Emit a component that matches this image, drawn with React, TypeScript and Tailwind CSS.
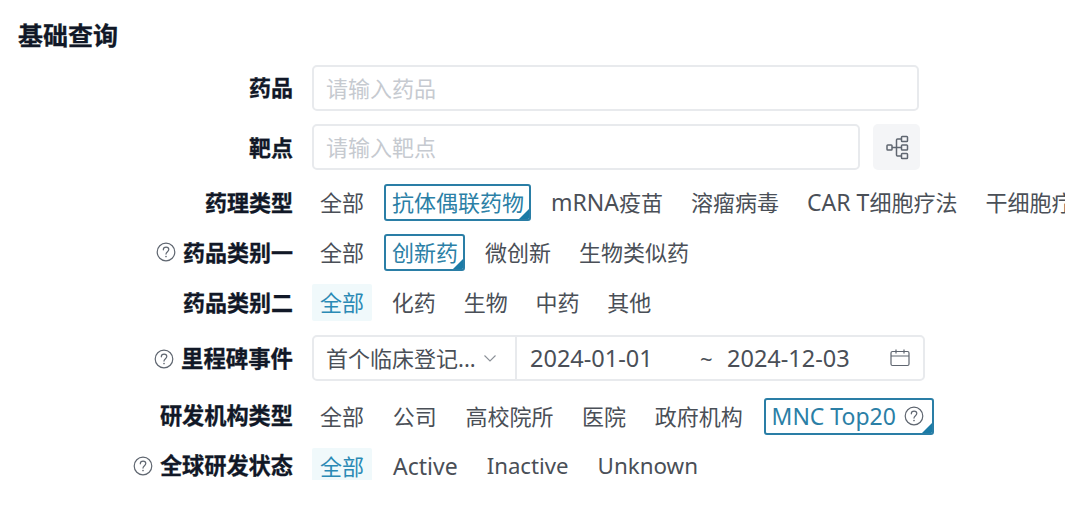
import * as React from "react"

function Help({ className = "" }: { className?: string }) {
  return (
    <svg viewBox="0 0 20 20" className={`w-[20px] h-[20px] shrink-0 ${className}`} fill="none" stroke="#5f6670" strokeWidth="1.2">
      <circle cx="10" cy="10" r="8.8" />
      <path d="M7.3 7.8c0-1.5 1.2-2.6 2.8-2.6s2.7 1 2.7 2.3c0 2.2-2.8 2.2-2.8 4.6" strokeLinecap="round" />
      <circle cx="10" cy="14.6" r="0.8" fill="#5f6670" stroke="none" />
    </svg>
  )
}

function Tag({ label, state, help }: { label: React.ReactNode; state?: "picked" | "soft"; help?: boolean }) {
  if (state === "picked") {
    return (
      <span className={`relative flex items-center gap-2 shrink-0 h-[37px] pl-[6px] pb-[2px] rounded-[3px] border-2 border-[#2a7ea6] text-[#2b7fa6] overflow-hidden ${help ? "pr-2" : "pr-[5px]"}`}>
        {label}
        {help && <Help />}
        <span className="absolute -right-px -bottom-px w-0 h-0 border-l-[12px] border-l-transparent border-b-[12px] border-b-[#1b7ba6]" />
      </span>
    )
  }
  return (
    <span className={`flex items-center shrink-0 h-[37px] px-2 pb-[2px] rounded-[2px] ${state === "soft" ? "bg-[#f0f9fb] text-[#2b8ab5]" : "text-[#4a4f57]"}`}>
      {label}
    </span>
  )
}

function Row({
  label,
  help,
  top,
  labelClass = "pb-[1px]",
  gap = "gap-3",
  children,
}: {
  label: string
  help?: boolean
  top: string
  labelClass?: string
  gap?: string
  children: React.ReactNode
}) {
  return (
    <div className={`flex items-center gap-[19px] ${top}`}>
      <div className={`w-[275px] shrink-0 flex items-center justify-end gap-[7px] font-bold text-[#111827] [-webkit-text-stroke:0.3px_#111827] ${labelClass}`}>
        {help && <Help />}
        <span>{label}</span>
      </div>
      <div className={`flex-1 min-w-0 flex items-center overflow-hidden whitespace-nowrap ${gap}`}>{children}</div>
    </div>
  )
}

export default function App() {
  return (
    <div className="w-[1080px] h-[514px] overflow-hidden bg-white pl-[18px] pr-[15px] pt-[19px] text-[22px] leading-[30px] font-['Noto_Sans','Noto_Sans_CJK_SC',sans-serif]">
      <h2 className="h-[32px] text-[25px] leading-[32px] font-bold text-[#111827] [-webkit-text-stroke:0.3px_#111827]">基础查询</h2>

      <Row label="药品" top="mt-[14px]" labelClass="pb-[2px]">
        <input readOnly placeholder="请输入药品" className="w-[607px] h-[46px] px-[12px] pb-[1px] rounded-[5px] border-2 border-[#e8eaed] placeholder:text-[#c6cad0] outline-none" />
      </Row>

      <Row label="靶点" top="mt-[13px]">
        <input readOnly placeholder="请输入靶点" className="w-[548px] h-[46px] px-[12px] pb-[1px] rounded-[5px] border-2 border-[#e8eaed] placeholder:text-[#c6cad0] outline-none" />
        <button className="flex items-center justify-center w-[47px] h-[46px] ml-[1px] rounded-[5px] bg-[#f4f5f7]">
          <svg viewBox="0 0 24 26" className="w-[24px] h-[26px]" fill="none" stroke="#5f6670" strokeWidth="1.5">
            <rect x="2" y="11" width="5" height="5" rx="0.8" />
            <rect x="16.5" y="2.5" width="6" height="5" rx="0.8" />
            <rect x="16.5" y="11" width="6" height="5" rx="0.8" />
            <rect x="16.5" y="19.5" width="6" height="5" rx="0.8" />
            <path d="M7 13.5h9.5M16.5 5h-4a1 1 0 0 0-1 1v15a1 1 0 0 0 1 1h4" />
          </svg>
        </button>
      </Row>

      <Row label="药理类型" top="mt-[14px]">
        <Tag label="全部" />
        <Tag label="抗体偶联药物" state="picked" />
        <Tag label={<span><span className="text-[23px]">mRNA</span>疫苗</span>} />
        <Tag label="溶瘤病毒" />
        <Tag label={<span><span className="text-[23px]">CAR T</span>细胞疗法</span>} />
        <Tag label="干细胞疗法" />
      </Row>

      <Row label="药品类别一" help top="mt-[13px]">
        <Tag label="全部" />
        <Tag label="创新药" state="picked" />
        <Tag label="微创新" />
        <Tag label="生物类似药" />
      </Row>

      <Row label="药品类别二" top="mt-[13px]" gap="gap-[11.8px]">
        <Tag label="全部" state="soft" />
        <Tag label="化药" />
        <Tag label="生物" />
        <Tag label="中药" />
        <Tag label="其他" />
      </Row>

      <Row label="里程碑事件" help top="mt-[14px]" labelClass="text-[22.4px] pt-[1px]">
        <div className="flex items-center w-[613px] h-[46px] rounded-[5px] border-2 border-[#e8eaed] text-[#4a4f57]">
          <div className="flex items-center w-[203px] h-full pl-[12px] border-r-2 border-[#e8eaed]">
            <span>首个临床登记...</span>
            <svg viewBox="0 0 14 14" className="w-[14px] h-[14px] ml-[7px]" fill="none" stroke="#8b9097" strokeWidth="1.1">
              <path d="M1.5 4.5 7 10l5.5-5.5" />
            </svg>
          </div>
          <span className="ml-[13px] w-[170px] text-[23.5px]">2024-01-01</span>
          <span className="w-[27px]">~</span>
          <span className="text-[23.5px]">2024-12-03</span>
          <svg viewBox="0 0 20 20" className="w-[20px] h-[20px] ml-[40px]" fill="none" stroke="#5f6670" strokeWidth="1.2">
            <rect x="1" y="3.5" width="18" height="14" rx="1.5" />
            <path d="M1 8h18M6 1.5v4M14 1.5v4" />
          </svg>
        </div>
      </Row>

      <Row label="研发机构类型" top="mt-[17px]" labelClass="text-[22.2px] pb-[1px]" gap="gap-[12.7px]">
        <Tag label="全部" />
        <Tag label="公司" />
        <Tag label="高校院所" />
        <Tag label="医院" />
        <Tag label="政府机构" />
        <Tag label={<span className="text-[23px]">MNC Top20</span>} state="picked" help />
      </Row>

      <div className="h-[32px] mt-[13px] overflow-hidden">
        <Row label="全球研发状态" help top="" labelClass="text-[22.2px] pb-[1px]" gap="gap-[13px]">
          <Tag label="全部" state="soft" />
          <Tag label={<span className="text-[23px]">Active</span>} />
          <Tag label={<span className="text-[22.2px]">Inactive</span>} />
          <Tag label={<span className="text-[22.4px]">Unknown</span>} />
        </Row>
      </div>
    </div>
  )
}
